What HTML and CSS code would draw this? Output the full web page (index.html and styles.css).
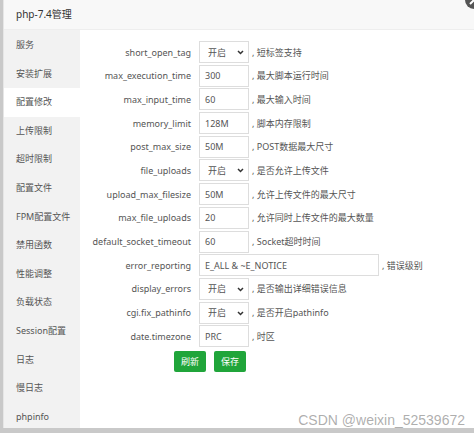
FILE: index.html
```html
<!DOCTYPE html>
<html lang="zh-CN">

<head>
  <meta charset="UTF-8">
  <meta name="viewport" content="width=device-width, initial-scale=1.0">
  <title>php-7.4管理</title>
  <link rel="stylesheet" href="styles.css">
</head>

<body>
  <div class="layer">
    <div class="layer-title">php-7.4管理</div>
    <svg class="layer-close" width="18" height="18" viewBox="0 0 18 18">
      <circle cx="9" cy="9" r="9" fill="#555"/>
      <path d="M5 5 L13 13 M13 5 L5 13" stroke="#fff" stroke-width="2"/>
    </svg>

    <div class="layer-body">
      <ul class="side-menu">
        <li>服务</li>
        <li>安装扩展</li>
        <li class="active">配置修改</li>
        <li>上传限制</li>
        <li>超时限制</li>
        <li>配置文件</li>
        <li>FPM配置文件</li>
        <li>禁用函数</li>
        <li>性能调整</li>
        <li>负载状态</li>
        <li>Session配置</li>
        <li>日志</li>
        <li>慢日志</li>
        <li>phpinfo</li>
      </ul>

      <form class="conf-form">
        <div class="conf-row">
          <label>short_open_tag</label>
          <span class="select-wrap">
            <select class="conf-input"><option>开启</option><option>关闭</option></select>
            <svg class="select-arrow" width="7" height="5" viewBox="0 0 7 5"><path d="M1 1 L3.5 3.5 L6 1" fill="none" stroke="#333" stroke-width="1.5"/></svg>
          </span>
          <span class="conf-tip">, 短标签支持</span>
        </div>
        <div class="conf-row">
          <label>max_execution_time</label>
          <input class="conf-input" type="text" value="300">
          <span class="conf-tip">, 最大脚本运行时间</span>
        </div>
        <div class="conf-row">
          <label>max_input_time</label>
          <input class="conf-input" type="text" value="60">
          <span class="conf-tip">, 最大输入时间</span>
        </div>
        <div class="conf-row">
          <label>memory_limit</label>
          <input class="conf-input" type="text" value="128M">
          <span class="conf-tip">, 脚本内存限制</span>
        </div>
        <div class="conf-row">
          <label>post_max_size</label>
          <input class="conf-input" type="text" value="50M">
          <span class="conf-tip">, POST数据最大尺寸</span>
        </div>
        <div class="conf-row">
          <label>file_uploads</label>
          <span class="select-wrap">
            <select class="conf-input"><option>开启</option><option>关闭</option></select>
            <svg class="select-arrow" width="7" height="5" viewBox="0 0 7 5"><path d="M1 1 L3.5 3.5 L6 1" fill="none" stroke="#333" stroke-width="1.5"/></svg>
          </span>
          <span class="conf-tip">, 是否允许上传文件</span>
        </div>
        <div class="conf-row">
          <label>upload_max_filesize</label>
          <input class="conf-input" type="text" value="50M">
          <span class="conf-tip">, 允许上传文件的最大尺寸</span>
        </div>
        <div class="conf-row">
          <label>max_file_uploads</label>
          <input class="conf-input" type="text" value="20">
          <span class="conf-tip">, 允许同时上传文件的最大数量</span>
        </div>
        <div class="conf-row">
          <label>default_socket_timeout</label>
          <input class="conf-input" type="text" value="60">
          <span class="conf-tip">, Socket超时时间</span>
        </div>
        <div class="conf-row">
          <label>error_reporting</label>
          <input class="conf-input wide" type="text" value="E_ALL &amp; ~E_NOTICE">
          <span class="conf-tip">, 错误级别</span>
        </div>
        <div class="conf-row">
          <label>display_errors</label>
          <span class="select-wrap">
            <select class="conf-input"><option>开启</option><option>关闭</option></select>
            <svg class="select-arrow" width="7" height="5" viewBox="0 0 7 5"><path d="M1 1 L3.5 3.5 L6 1" fill="none" stroke="#333" stroke-width="1.5"/></svg>
          </span>
          <span class="conf-tip">, 是否输出详细错误信息</span>
        </div>
        <div class="conf-row">
          <label>cgi.fix_pathinfo</label>
          <span class="select-wrap">
            <select class="conf-input"><option>开启</option><option>关闭</option></select>
            <svg class="select-arrow" width="7" height="5" viewBox="0 0 7 5"><path d="M1 1 L3.5 3.5 L6 1" fill="none" stroke="#333" stroke-width="1.5"/></svg>
          </span>
          <span class="conf-tip">, 是否开启pathinfo</span>
        </div>
        <div class="conf-row">
          <label>date.timezone</label>
          <input class="conf-input" type="text" value="PRC">
          <span class="conf-tip">, 时区</span>
        </div>

        <div class="conf-btns">
          <button type="button" class="btn-green">刷新</button>
          <button type="button" class="btn-green">保存</button>
        </div>
      </form>
    </div>

    <div class="watermark">CSDN @weixin_52539672</div>
  </div>
</body>

</html>
```

FILE: styles.css
```css
html,
body {
  margin: 0;
  padding: 0;
}

body {
  width: 474px;
  height: 433px;
  overflow: hidden;
  background-color: #c9c9c9;
  font-family: "Noto Sans", "Noto Sans CJK SC", sans-serif;
  color: #555;
}

.layer {
  position: relative;
  margin-left: 3px;
  height: 428px;
  background-color: #fff;
  border-left: 1px solid #e6e6e6;
  box-sizing: border-box;
  overflow: hidden;
}

.layer-title {
  height: 29px;
  line-height: 29px;
  padding-left: 12px;
  background-color: #f8f8f8;
  border-bottom: 1px solid #eee;
  font-size: 10px;
  color: #333;
}

.layer-close {
  position: absolute;
  top: -9px;
  right: -9px;
}

.layer-body {
  display: flex;
  height: 398px;
}

.side-menu {
  list-style: none;
  margin: 0;
  padding: 1px 0 0;
  width: 76px;
  background-color: #f2f2f2;
}

.side-menu li {
  height: 28.6px;
  line-height: 28.6px;
  padding-left: 12px;
  font-size: 9px;
  color: #555;
  white-space: nowrap;
}

.side-menu li.active {
  background-color: #fff;
}

.conf-form {
  flex: 1;
  padding-top: 11px;
}

.conf-row {
  display: flex;
  align-items: center;
  height: 22px;
  margin-bottom: 1.7px;
}

.conf-row label {
  width: 111px;
  margin-right: 8px;
  text-align: right;
  font-size: 9px;
  color: #555;
  white-space: nowrap;
}

.conf-input {
  box-sizing: border-box;
  width: 50px;
  height: 22px;
  padding: 0 5px;
  border: 1px solid #ddd;
  border-radius: 0;
  background-color: #fff;
  font-family: inherit;
  font-size: 9px;
  color: #555;
  outline: none;
}

.select-wrap {
  position: relative;
  display: flex;
}

select.conf-input {
  appearance: none;
  -webkit-appearance: none;
  padding: 0 12px 0 8px;
}

.select-arrow {
  position: absolute;
  right: 5px;
  top: 9px;
  pointer-events: none;
}

.conf-input.wide {
  width: 180px;
}

.conf-tip {
  margin-left: 3px;
  font-size: 9px;
  color: #555;
  white-space: nowrap;
}

.conf-btns {
  display: flex;
  gap: 8px;
  padding-left: 94px;
  margin-top: 4px;
}

.btn-green {
  width: 32px;
  height: 21px;
  padding: 0;
  border: none;
  border-radius: 2px;
  background-color: #20a53a;
  color: #fff;
  font-family: inherit;
  font-size: 9px;
  cursor: pointer;
}

.watermark {
  position: absolute;
  right: 9px;
  bottom: 0;
  font-family: "Liberation Sans", Arial, sans-serif;
  font-size: 14px;
  color: rgba(120, 120, 120, 0.6);
}
```
